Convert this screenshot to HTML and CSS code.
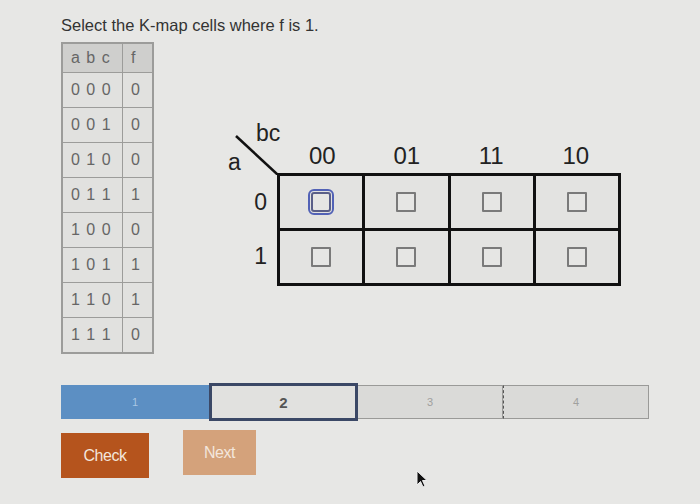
FILE: index.html
```html
<!DOCTYPE html>
<html>
<head>
<meta charset="utf-8">
<link rel="stylesheet" href="styles.css">
</head>
<body>
<div class="page">
  <p class="title">Select the K-map cells where f is 1.</p>
  <div class="main">
    <table class="tt">
      <thead><tr><th class="c1">a b c</th><th class="c2">f</th></tr></thead>
      <tbody>
        <tr><td class="c1">0 0 0</td><td class="c2">0</td></tr>
        <tr><td class="c1">0 0 1</td><td class="c2">0</td></tr>
        <tr><td class="c1">0 1 0</td><td class="c2">0</td></tr>
        <tr><td class="c1">0 1 1</td><td class="c2">1</td></tr>
        <tr><td class="c1">1 0 0</td><td class="c2">0</td></tr>
        <tr><td class="c1">1 0 1</td><td class="c2">1</td></tr>
        <tr><td class="c1">1 1 0</td><td class="c2">1</td></tr>
        <tr><td class="c1">1 1 1</td><td class="c2">0</td></tr>
      </tbody>
    </table>
    <div class="kmap">
      <div class="corner">
        <svg class="diag" width="58" height="56" viewBox="0 0 58 56"><line x1="15" y1="17" x2="57" y2="56" stroke="#111" stroke-width="2.5"/></svg>
        <span class="lab-a">a</span>
        <span class="lab-bc">bc</span>
      </div>
      <div class="colheads"><span>00</span><span>01</span><span>11</span><span>10</span></div>
      <div class="rowheads"><span>0</span><span>1</span></div>
      <div class="cells">
        <div class="cell"><span class="box focus"></span></div>
        <div class="cell"><span class="box"></span></div>
        <div class="cell"><span class="box"></span></div>
        <div class="cell"><span class="box"></span></div>
        <div class="cell"><span class="box"></span></div>
        <div class="cell"><span class="box"></span></div>
        <div class="cell"><span class="box"></span></div>
        <div class="cell"><span class="box"></span></div>
      </div>
    </div>
  </div>
  <div class="progress">
    <div class="seg done">1</div>
    <div class="seg current">2</div>
    <div class="seg todo">3</div>
    <div class="seg todo last">4</div>
  </div>
  <div class="buttons">
    <button class="btn check">Check</button>
    <button class="btn next">Next</button>
    <svg class="cursor" width="14" height="20" viewBox="0 0 14 20"><path d="M1 1 L1 15 L4.5 11.5 L7 17 L9 16 L6.5 10.5 L11 10.5 Z" fill="#111" stroke="#eee" stroke-width="1"/></svg>
  </div>
</div>
</body>
</html>
```
FILE: styles.css
```css
html, body {
  margin: 0;
  padding: 0;
  background: #e7e7e5;
}
.page {
  width: 700px;
  height: 504px;
  padding: 14px 0 0 61px;
  box-sizing: border-box;
  font-family: "Liberation Sans", Arial, sans-serif;
  overflow: hidden;
}
.title {
  margin: 0;
  font-size: 16.5px;
  line-height: 22px;
  color: #333;
}
.main {
  display: flex;
  align-items: flex-start;
  margin-top: 6px;
}
.tt {
  border-collapse: collapse;
  border: 2px solid #9c9c9a;
  font-size: 16px;
  color: #666;
}
.tt th, .tt td {
  border: 1px solid #9c9c9a;
  font-weight: normal;
  text-align: left;
  padding: 0 0 0 8px;
}
.tt th {
  background: #cfcfcd;
  height: 28px;
}
.tt td {
  background: #e1e1df;
  height: 34px;
}
.tt .c1 { width: 51px; letter-spacing: 1px; }
.tt .c2 { width: 21px; }

.kmap {
  display: grid;
  grid-template-columns: 56px 344px;
  grid-template-rows: 54px 113px;
  margin: 77px 0 0 67px;
}
.corner {
  position: relative;
}
.diag {
  position: absolute;
  left: 0;
  top: 0;
}
.lab-a {
  position: absolute;
  left: 7px;
  top: 30px;
  font-size: 23px;
  color: #222;
}
.lab-bc {
  position: absolute;
  left: 35px;
  top: 1px;
  font-size: 23px;
  color: #222;
}
.colheads {
  display: grid;
  grid-template-columns: repeat(4, 1fr);
  align-items: end;
  padding: 0 3px 4px;
}
.colheads span {
  text-align: center;
  font-size: 24px;
  line-height: 26px;
  color: #222;
}
.rowheads {
  display: grid;
  grid-template-rows: 1fr 1fr;
  padding: 3px 0;
}
.rowheads span {
  display: flex;
  align-items: center;
  justify-content: flex-end;
  padding-right: 10px;
  font-size: 23px;
  color: #222;
}
.cells {
  display: grid;
  grid-template-columns: repeat(4, 1fr);
  grid-template-rows: 1fr 1fr;
  gap: 3px;
  padding: 3px;
  background: #111;
}
.cell {
  background: #e3e3e1;
  display: flex;
  align-items: center;
  justify-content: center;
}
.box {
  width: 16px;
  height: 16px;
  border: 2px solid #7a7a7a;
  border-radius: 1px;
  background: #e6e6e4;
}
.box.focus {
  border-color: #5a5f88;
  border-radius: 3px;
  outline: 2px solid #5262b6;
  outline-offset: 1px;
}

.progress {
  display: flex;
  align-items: center;
  width: 588px;
  margin-top: 28px;
  height: 40px;
}
.seg {
  box-sizing: border-box;
  display: flex;
  align-items: center;
  justify-content: center;
  font-family: "Liberation Sans", Arial, sans-serif;
}
.seg.done {
  width: 148px;
  height: 34px;
  background: #5c8fc3;
  color: #a9c6e4;
  font-size: 11px;
}
.seg.current {
  width: 149px;
  height: 38px;
  background: #e1e1df;
  border: 3px solid #3b4866;
  color: #555;
  font-size: 15px;
  font-weight: bold;
}
.seg.todo {
  width: 145px;
  height: 34px;
  background: #dadad8;
  border: 1px solid #9a9a98;
  border-left: none;
  color: #a0a09e;
  font-size: 11px;
}
.seg.last {
  width: 146px;
  border-left: 1px dashed #555;
}
.buttons {
  display: flex;
  align-items: flex-start;
  margin-top: 11px;
}
.btn {
  border: none;
  color: #f3e6dc;
  font-family: "Liberation Sans", Arial, sans-serif;
  font-size: 16px;
  letter-spacing: -0.5px;
  padding: 0;
}
.btn.check {
  width: 88px;
  height: 45px;
  background: #b5541d;
}
.btn.next {
  width: 73px;
  height: 45px;
  margin: -3px 0 0 34px;
  background: #d4a27b;
}
.cursor {
  margin: 37px 0 0 160px;
}
```
